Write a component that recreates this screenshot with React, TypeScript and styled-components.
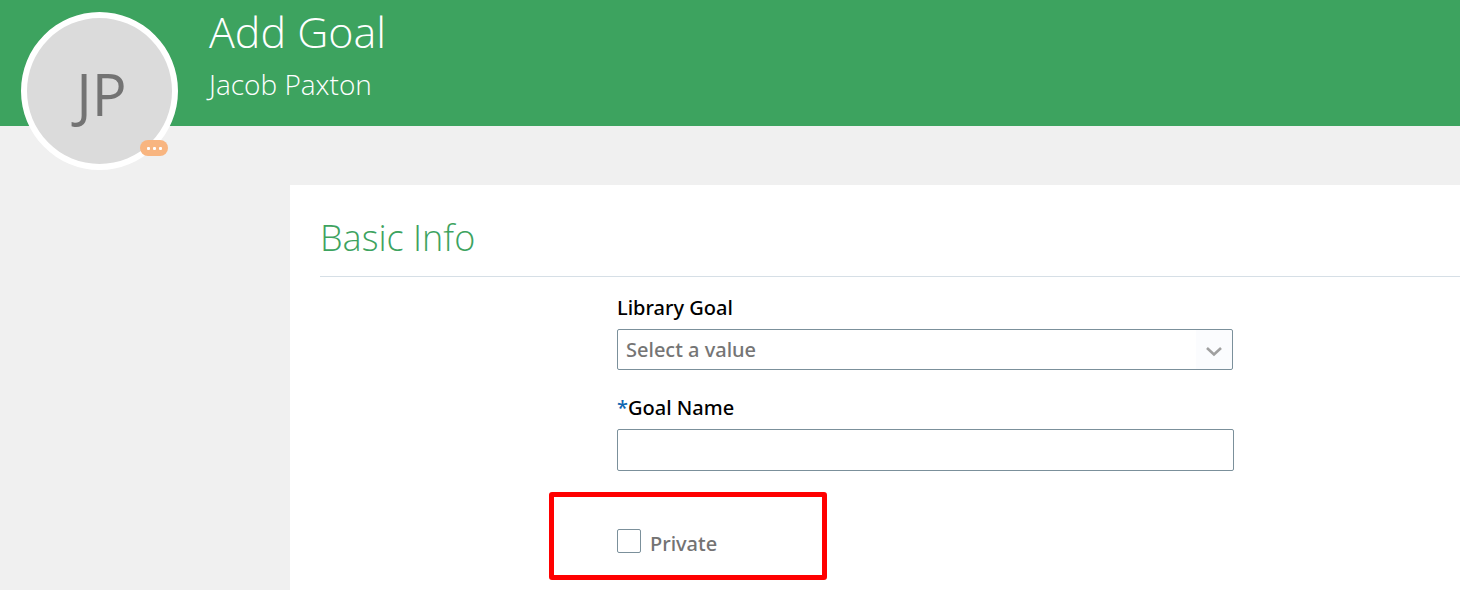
import React from "react";
import styled, { createGlobalStyle } from "styled-components";

const GlobalStyle = createGlobalStyle`
  * { box-sizing: border-box; }
  body {
    margin: 0;
    background: #f0f0f0;
    color: #000;
    font-family: "Segoe UI", "Open Sans", "Noto Sans", sans-serif;
  }
`;

const labelFont = `"Segoe UI", "Noto Sans", "Open Sans", sans-serif`;

const Page = styled.div`
  min-height: 100vh;
  display: flex;
  flex-direction: column;
`;

const Header = styled.header`
  display: flex;
  align-items: flex-start;
  gap: 31px;
  height: 126px;
  padding: 0 21px;
  background: #3da35f;
  color: #fff;
`;

const Avatar = styled.div`
  position: relative;
  flex: none;
  display: flex;
  align-items: center;
  justify-content: center;
  width: 157px;
  height: 158px;
  margin-top: 12px;
  padding: 6px 0 0 4px;
  border: 6px solid #fff;
  border-radius: 50%;
  background: #dbdbdb;
  color: #737373;
  font-size: 58px;
  line-height: 64px;
`;

const MoreButton = styled.button`
  position: absolute;
  right: 4px;
  bottom: 8px;
  display: flex;
  align-items: center;
  justify-content: center;
  gap: 3px;
  width: 28px;
  height: 16px;
  padding: 0;
  border: 0;
  border-radius: 8px;
  background: #f8b580;
`;

const Dot = styled.span`
  width: 3px;
  height: 3px;
  border-radius: 1px;
  background: #fff;
`;

const Titles = styled.div`
  font-weight: 300;
`;

const Title = styled.h1`
  margin: 0;
  font-size: 43px;
  line-height: 64px;
  font-weight: 300;
`;

const Person = styled.p`
  margin: 0;
  font-size: 28px;
  line-height: 40px;
`;

const Panel = styled.main`
  flex: 1;
  margin: 59px 0 0 290px;
  padding: 24px 0 0 30px;
  background: #fff;
`;

const SectionTitle = styled.h2`
  margin: 0;
  padding-bottom: 9px;
  border-bottom: 1px solid #d6dfe6;
  color: #3da35f;
  font-size: 36px;
  line-height: 58px;
  font-weight: 300;
`;

const Form = styled.form`
  margin-left: 297px;
  padding-top: 16px;
  max-width: 617px;
`;

const Field = styled.div`
  display: flex;
  flex-direction: column;
  margin-bottom: 22px;
`;

const Label = styled.label`
  margin-bottom: 6px;
  font-family: ${labelFont};
  font-size: 20px;
  line-height: 30px;
  font-weight: 500;
`;

const Required = styled.span`
  color: #0f67b1;
`;

const SelectWrap = styled.div`
  position: relative;
  display: flex;
  margin: 0 1px 1px 0;
`;

const Select = styled.select`
  appearance: none;
  width: 100%;
  height: 41px;
  padding: 0 40px 0 8px;
  border: 1px solid #7b909b;
  border-radius: 2px;
  background: linear-gradient(#fbfcfe, #fbfcfe) right / 36px 100% no-repeat #fff;
  color: #757575;
  font-family: ${labelFont};
  font-size: 20px;
  font-weight: 500;
`;

const Chevron = styled.svg`
  position: absolute;
  top: 16px;
  right: 11px;
  pointer-events: none;
`;

const TextInput = styled.input`
  width: 100%;
  height: 42px;
  padding: 0 8px;
  border: 1px solid #7b909b;
  border-radius: 2px;
  background: #fff;
  font-family: inherit;
  font-size: 20px;
`;

const Highlight = styled.div`
  width: 278px;
  height: 88px;
  margin: -1px 0 10px -68px;
  padding: 32px 0 0 63px;
  border: 5px solid #f00;
  border-radius: 3px;
`;

const CheckLabel = styled.label`
  display: flex;
  align-items: flex-start;
  gap: 9px;
  color: #737373;
  font-family: ${labelFont};
  font-size: 20px;
  line-height: 30px;
  font-weight: 500;
`;

const Checkbox = styled.input`
  appearance: none;
  width: 24px;
  height: 24px;
  margin: 0;
  border: 1px solid #7b909b;
  border-radius: 2px;
  background: #fff;

  &:checked {
    background: #3da35f;
  }
`;

export default function App() {
  return (
    <Page>
      <GlobalStyle />
      <Header>
        <Avatar>
          JP
          <MoreButton type="button" aria-label="More">
            <Dot />
            <Dot />
            <Dot />
          </MoreButton>
        </Avatar>
        <Titles>
          <Title>Add Goal</Title>
          <Person>Jacob Paxton</Person>
        </Titles>
      </Header>
      <Panel>
        <SectionTitle>Basic Info</SectionTitle>
        <Form>
          <Field>
            <Label htmlFor="library">Library Goal</Label>
            <SelectWrap>
              <Select id="library" defaultValue="">
                <option value="">Select a value</option>
              </Select>
              <Chevron width="16" height="12" viewBox="0 0 16 12" fill="none">
                <path d="M1 3 8 9.500 15 3" stroke="#a0a0a0" strokeWidth="2.600" />
              </Chevron>
            </SelectWrap>
          </Field>
          <Field>
            <Label htmlFor="name">
              <Required>*</Required>Goal Name
            </Label>
            <TextInput id="name" type="text" required />
          </Field>
          <Highlight>
            <CheckLabel>
              <Checkbox type="checkbox" />
              Private
            </CheckLabel>
          </Highlight>
        </Form>
      </Panel>
    </Page>
  );
}
